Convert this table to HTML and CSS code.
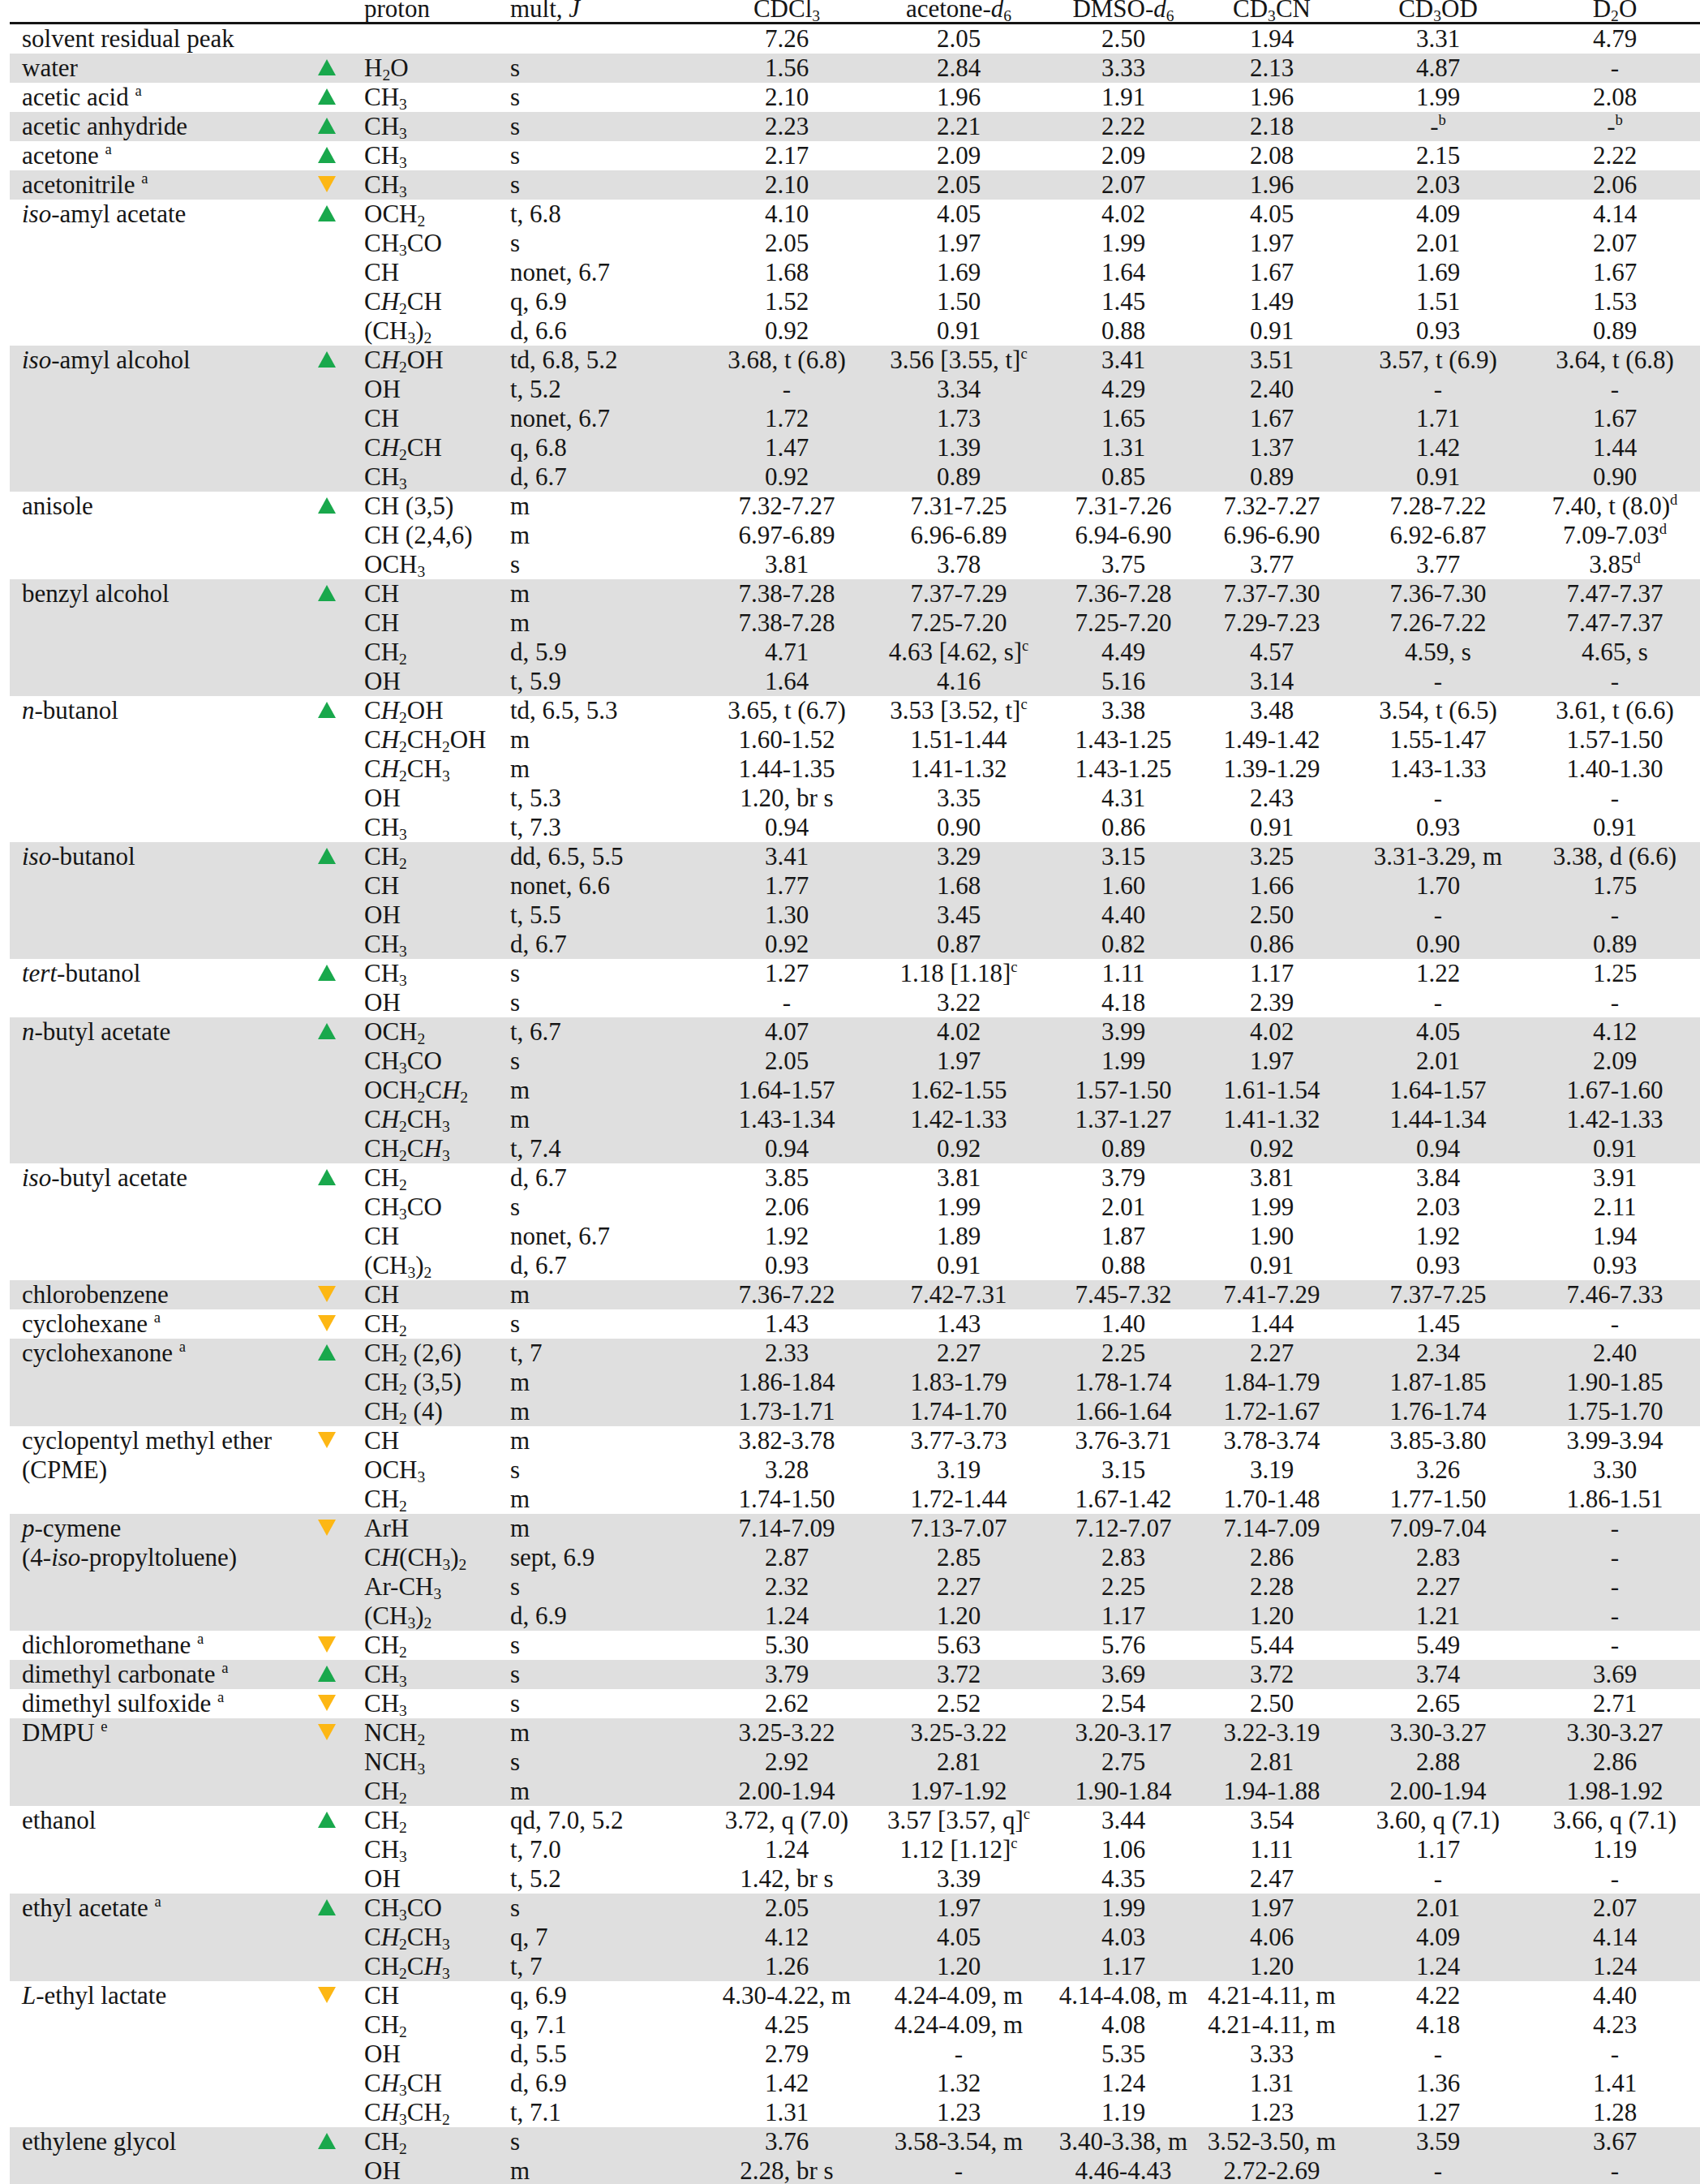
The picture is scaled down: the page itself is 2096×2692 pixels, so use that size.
FILE: index.html
```html
<!DOCTYPE html>
<html>
<head>
<meta charset="utf-8">
<title>Residual solvent shifts</title>
<link rel="stylesheet" href="styles.css">
</head>
<body>
<div class="tbl">
  <div class="hdr">
    <div></div><div></div><div>proton</div><div>mult, <i>J</i></div>
    <div class="v">CDCl<sub>3</sub></div><div class="v">acetone-<i>d</i><sub>6</sub></div><div class="v">DMSO-<i>d</i><sub>6</sub></div><div class="v">CD<sub>3</sub>CN</div><div class="v">CD<sub>3</sub>OD</div><div class="v">D<sub>2</sub>O</div>
  </div>

  <div class="grp">
    <div class="nm">solvent residual peak</div><div class="tr"></div><div></div><div></div>
    <div class="v">7.26</div><div class="v">2.05</div><div class="v">2.50</div><div class="v">1.94</div><div class="v">3.31</div><div class="v">4.79</div>
  </div>

  <div class="grp g">
    <div class="nm">water</div><div class="tr"><svg class="tri" viewBox="0 0 22 20"><polygon class="up" points="11,0 22,20 0,20"/></svg></div>
    <div>H<sub>2</sub>O</div><div>s</div><div class="v">1.56</div><div class="v">2.84</div><div class="v">3.33</div><div class="v">2.13</div><div class="v">4.87</div><div class="v">-</div>
  </div>

  <div class="grp">
    <div class="nm">acetic acid <sup>a</sup></div><div class="tr"><svg class="tri" viewBox="0 0 22 20"><polygon class="up" points="11,0 22,20 0,20"/></svg></div>
    <div>CH<sub>3</sub></div><div>s</div><div class="v">2.10</div><div class="v">1.96</div><div class="v">1.91</div><div class="v">1.96</div><div class="v">1.99</div><div class="v">2.08</div>
  </div>

  <div class="grp g">
    <div class="nm">acetic anhydride</div><div class="tr"><svg class="tri" viewBox="0 0 22 20"><polygon class="up" points="11,0 22,20 0,20"/></svg></div>
    <div>CH<sub>3</sub></div><div>s</div><div class="v">2.23</div><div class="v">2.21</div><div class="v">2.22</div><div class="v">2.18</div><div class="v">-<sup>b</sup></div><div class="v">-<sup>b</sup></div>
  </div>

  <div class="grp">
    <div class="nm">acetone <sup>a</sup></div><div class="tr"><svg class="tri" viewBox="0 0 22 20"><polygon class="up" points="11,0 22,20 0,20"/></svg></div>
    <div>CH<sub>3</sub></div><div>s</div><div class="v">2.17</div><div class="v">2.09</div><div class="v">2.09</div><div class="v">2.08</div><div class="v">2.15</div><div class="v">2.22</div>
  </div>

  <div class="grp g">
    <div class="nm">acetonitrile <sup>a</sup></div><div class="tr"><svg class="tri" viewBox="0 0 22 20"><polygon class="dn" points="0,0 22,0 11,20"/></svg></div>
    <div>CH<sub>3</sub></div><div>s</div><div class="v">2.10</div><div class="v">2.05</div><div class="v">2.07</div><div class="v">1.96</div><div class="v">2.03</div><div class="v">2.06</div>
  </div>

  <div class="grp">
    <div class="nm s5"><i>iso</i>-amyl acetate</div><div class="tr s5"><svg class="tri" viewBox="0 0 22 20"><polygon class="up" points="11,0 22,20 0,20"/></svg></div>
    <div>OCH<sub>2</sub></div><div>t, 6.8</div><div class="v">4.10</div><div class="v">4.05</div><div class="v">4.02</div><div class="v">4.05</div><div class="v">4.09</div><div class="v">4.14</div>
    <div>CH<sub>3</sub>CO</div><div>s</div><div class="v">2.05</div><div class="v">1.97</div><div class="v">1.99</div><div class="v">1.97</div><div class="v">2.01</div><div class="v">2.07</div>
    <div>CH</div><div>nonet, 6.7</div><div class="v">1.68</div><div class="v">1.69</div><div class="v">1.64</div><div class="v">1.67</div><div class="v">1.69</div><div class="v">1.67</div>
    <div>C<i>H</i><sub>2</sub>CH</div><div>q, 6.9</div><div class="v">1.52</div><div class="v">1.50</div><div class="v">1.45</div><div class="v">1.49</div><div class="v">1.51</div><div class="v">1.53</div>
    <div>(CH<sub>3</sub>)<sub>2</sub></div><div>d, 6.6</div><div class="v">0.92</div><div class="v">0.91</div><div class="v">0.88</div><div class="v">0.91</div><div class="v">0.93</div><div class="v">0.89</div>
  </div>

  <div class="grp g">
    <div class="nm s5"><i>iso</i>-amyl alcohol</div><div class="tr s5"><svg class="tri" viewBox="0 0 22 20"><polygon class="up" points="11,0 22,20 0,20"/></svg></div>
    <div>C<i>H</i><sub>2</sub>OH</div><div>td, 6.8, 5.2</div><div class="v">3.68, t (6.8)</div><div class="v">3.56 [3.55, t]<sup>c</sup></div><div class="v">3.41</div><div class="v">3.51</div><div class="v">3.57, t (6.9)</div><div class="v">3.64, t (6.8)</div>
    <div>OH</div><div>t, 5.2</div><div class="v">-</div><div class="v">3.34</div><div class="v">4.29</div><div class="v">2.40</div><div class="v">-</div><div class="v">-</div>
    <div>CH</div><div>nonet, 6.7</div><div class="v">1.72</div><div class="v">1.73</div><div class="v">1.65</div><div class="v">1.67</div><div class="v">1.71</div><div class="v">1.67</div>
    <div>C<i>H</i><sub>2</sub>CH</div><div>q, 6.8</div><div class="v">1.47</div><div class="v">1.39</div><div class="v">1.31</div><div class="v">1.37</div><div class="v">1.42</div><div class="v">1.44</div>
    <div>CH<sub>3</sub></div><div>d, 6.7</div><div class="v">0.92</div><div class="v">0.89</div><div class="v">0.85</div><div class="v">0.89</div><div class="v">0.91</div><div class="v">0.90</div>
  </div>

  <div class="grp">
    <div class="nm s3">anisole</div><div class="tr s3"><svg class="tri" viewBox="0 0 22 20"><polygon class="up" points="11,0 22,20 0,20"/></svg></div>
    <div>CH (3,5)</div><div>m</div><div class="v">7.32-7.27</div><div class="v">7.31-7.25</div><div class="v">7.31-7.26</div><div class="v">7.32-7.27</div><div class="v">7.28-7.22</div><div class="v">7.40, t (8.0)<sup>d</sup></div>
    <div>CH (2,4,6)</div><div>m</div><div class="v">6.97-6.89</div><div class="v">6.96-6.89</div><div class="v">6.94-6.90</div><div class="v">6.96-6.90</div><div class="v">6.92-6.87</div><div class="v">7.09-7.03<sup>d</sup></div>
    <div>OCH<sub>3</sub></div><div>s</div><div class="v">3.81</div><div class="v">3.78</div><div class="v">3.75</div><div class="v">3.77</div><div class="v">3.77</div><div class="v">3.85<sup>d</sup></div>
  </div>

  <div class="grp g">
    <div class="nm s4">benzyl alcohol</div><div class="tr s4"><svg class="tri" viewBox="0 0 22 20"><polygon class="up" points="11,0 22,20 0,20"/></svg></div>
    <div>CH</div><div>m</div><div class="v">7.38-7.28</div><div class="v">7.37-7.29</div><div class="v">7.36-7.28</div><div class="v">7.37-7.30</div><div class="v">7.36-7.30</div><div class="v">7.47-7.37</div>
    <div>CH</div><div>m</div><div class="v">7.38-7.28</div><div class="v">7.25-7.20</div><div class="v">7.25-7.20</div><div class="v">7.29-7.23</div><div class="v">7.26-7.22</div><div class="v">7.47-7.37</div>
    <div>CH<sub>2</sub></div><div>d, 5.9</div><div class="v">4.71</div><div class="v">4.63 [4.62, s]<sup>c</sup></div><div class="v">4.49</div><div class="v">4.57</div><div class="v">4.59, s</div><div class="v">4.65, s</div>
    <div>OH</div><div>t, 5.9</div><div class="v">1.64</div><div class="v">4.16</div><div class="v">5.16</div><div class="v">3.14</div><div class="v">-</div><div class="v">-</div>
  </div>

  <div class="grp">
    <div class="nm s5"><i>n</i>-butanol</div><div class="tr s5"><svg class="tri" viewBox="0 0 22 20"><polygon class="up" points="11,0 22,20 0,20"/></svg></div>
    <div>C<i>H</i><sub>2</sub>OH</div><div>td, 6.5, 5.3</div><div class="v">3.65, t (6.7)</div><div class="v">3.53 [3.52, t]<sup>c</sup></div><div class="v">3.38</div><div class="v">3.48</div><div class="v">3.54, t (6.5)</div><div class="v">3.61, t (6.6)</div>
    <div>C<i>H</i><sub>2</sub>CH<sub>2</sub>OH</div><div>m</div><div class="v">1.60-1.52</div><div class="v">1.51-1.44</div><div class="v">1.43-1.25</div><div class="v">1.49-1.42</div><div class="v">1.55-1.47</div><div class="v">1.57-1.50</div>
    <div>C<i>H</i><sub>2</sub>CH<sub>3</sub></div><div>m</div><div class="v">1.44-1.35</div><div class="v">1.41-1.32</div><div class="v">1.43-1.25</div><div class="v">1.39-1.29</div><div class="v">1.43-1.33</div><div class="v">1.40-1.30</div>
    <div>OH</div><div>t, 5.3</div><div class="v">1.20, br s</div><div class="v">3.35</div><div class="v">4.31</div><div class="v">2.43</div><div class="v">-</div><div class="v">-</div>
    <div>CH<sub>3</sub></div><div>t, 7.3</div><div class="v">0.94</div><div class="v">0.90</div><div class="v">0.86</div><div class="v">0.91</div><div class="v">0.93</div><div class="v">0.91</div>
  </div>

  <div class="grp g">
    <div class="nm s4"><i>iso</i>-butanol</div><div class="tr s4"><svg class="tri" viewBox="0 0 22 20"><polygon class="up" points="11,0 22,20 0,20"/></svg></div>
    <div>CH<sub>2</sub></div><div>dd, 6.5, 5.5</div><div class="v">3.41</div><div class="v">3.29</div><div class="v">3.15</div><div class="v">3.25</div><div class="v">3.31-3.29, m</div><div class="v">3.38, d (6.6)</div>
    <div>CH</div><div>nonet, 6.6</div><div class="v">1.77</div><div class="v">1.68</div><div class="v">1.60</div><div class="v">1.66</div><div class="v">1.70</div><div class="v">1.75</div>
    <div>OH</div><div>t, 5.5</div><div class="v">1.30</div><div class="v">3.45</div><div class="v">4.40</div><div class="v">2.50</div><div class="v">-</div><div class="v">-</div>
    <div>CH<sub>3</sub></div><div>d, 6.7</div><div class="v">0.92</div><div class="v">0.87</div><div class="v">0.82</div><div class="v">0.86</div><div class="v">0.90</div><div class="v">0.89</div>
  </div>

  <div class="grp">
    <div class="nm s2"><i>tert</i>-butanol</div><div class="tr s2"><svg class="tri" viewBox="0 0 22 20"><polygon class="up" points="11,0 22,20 0,20"/></svg></div>
    <div>CH<sub>3</sub></div><div>s</div><div class="v">1.27</div><div class="v">1.18 [1.18]<sup>c</sup></div><div class="v">1.11</div><div class="v">1.17</div><div class="v">1.22</div><div class="v">1.25</div>
    <div>OH</div><div>s</div><div class="v">-</div><div class="v">3.22</div><div class="v">4.18</div><div class="v">2.39</div><div class="v">-</div><div class="v">-</div>
  </div>

  <div class="grp g">
    <div class="nm s5"><i>n</i>-butyl acetate</div><div class="tr s5"><svg class="tri" viewBox="0 0 22 20"><polygon class="up" points="11,0 22,20 0,20"/></svg></div>
    <div>OCH<sub>2</sub></div><div>t, 6.7</div><div class="v">4.07</div><div class="v">4.02</div><div class="v">3.99</div><div class="v">4.02</div><div class="v">4.05</div><div class="v">4.12</div>
    <div>CH<sub>3</sub>CO</div><div>s</div><div class="v">2.05</div><div class="v">1.97</div><div class="v">1.99</div><div class="v">1.97</div><div class="v">2.01</div><div class="v">2.09</div>
    <div>OCH<sub>2</sub>C<i>H</i><sub>2</sub></div><div>m</div><div class="v">1.64-1.57</div><div class="v">1.62-1.55</div><div class="v">1.57-1.50</div><div class="v">1.61-1.54</div><div class="v">1.64-1.57</div><div class="v">1.67-1.60</div>
    <div>C<i>H</i><sub>2</sub>CH<sub>3</sub></div><div>m</div><div class="v">1.43-1.34</div><div class="v">1.42-1.33</div><div class="v">1.37-1.27</div><div class="v">1.41-1.32</div><div class="v">1.44-1.34</div><div class="v">1.42-1.33</div>
    <div>CH<sub>2</sub>C<i>H</i><sub>3</sub></div><div>t, 7.4</div><div class="v">0.94</div><div class="v">0.92</div><div class="v">0.89</div><div class="v">0.92</div><div class="v">0.94</div><div class="v">0.91</div>
  </div>

  <div class="grp">
    <div class="nm s4"><i>iso</i>-butyl acetate</div><div class="tr s4"><svg class="tri" viewBox="0 0 22 20"><polygon class="up" points="11,0 22,20 0,20"/></svg></div>
    <div>CH<sub>2</sub></div><div>d, 6.7</div><div class="v">3.85</div><div class="v">3.81</div><div class="v">3.79</div><div class="v">3.81</div><div class="v">3.84</div><div class="v">3.91</div>
    <div>CH<sub>3</sub>CO</div><div>s</div><div class="v">2.06</div><div class="v">1.99</div><div class="v">2.01</div><div class="v">1.99</div><div class="v">2.03</div><div class="v">2.11</div>
    <div>CH</div><div>nonet, 6.7</div><div class="v">1.92</div><div class="v">1.89</div><div class="v">1.87</div><div class="v">1.90</div><div class="v">1.92</div><div class="v">1.94</div>
    <div>(CH<sub>3</sub>)<sub>2</sub></div><div>d, 6.7</div><div class="v">0.93</div><div class="v">0.91</div><div class="v">0.88</div><div class="v">0.91</div><div class="v">0.93</div><div class="v">0.93</div>
  </div>

  <div class="grp g">
    <div class="nm">chlorobenzene</div><div class="tr"><svg class="tri" viewBox="0 0 22 20"><polygon class="dn" points="0,0 22,0 11,20"/></svg></div>
    <div>CH</div><div>m</div><div class="v">7.36-7.22</div><div class="v">7.42-7.31</div><div class="v">7.45-7.32</div><div class="v">7.41-7.29</div><div class="v">7.37-7.25</div><div class="v">7.46-7.33</div>
  </div>

  <div class="grp">
    <div class="nm">cyclohexane <sup>a</sup></div><div class="tr"><svg class="tri" viewBox="0 0 22 20"><polygon class="dn" points="0,0 22,0 11,20"/></svg></div>
    <div>CH<sub>2</sub></div><div>s</div><div class="v">1.43</div><div class="v">1.43</div><div class="v">1.40</div><div class="v">1.44</div><div class="v">1.45</div><div class="v">-</div>
  </div>

  <div class="grp g">
    <div class="nm s3">cyclohexanone <sup>a</sup></div><div class="tr s3"><svg class="tri" viewBox="0 0 22 20"><polygon class="up" points="11,0 22,20 0,20"/></svg></div>
    <div>CH<sub>2</sub> (2,6)</div><div>t, 7</div><div class="v">2.33</div><div class="v">2.27</div><div class="v">2.25</div><div class="v">2.27</div><div class="v">2.34</div><div class="v">2.40</div>
    <div>CH<sub>2</sub> (3,5)</div><div>m</div><div class="v">1.86-1.84</div><div class="v">1.83-1.79</div><div class="v">1.78-1.74</div><div class="v">1.84-1.79</div><div class="v">1.87-1.85</div><div class="v">1.90-1.85</div>
    <div>CH<sub>2</sub> (4)</div><div>m</div><div class="v">1.73-1.71</div><div class="v">1.74-1.70</div><div class="v">1.66-1.64</div><div class="v">1.72-1.67</div><div class="v">1.76-1.74</div><div class="v">1.75-1.70</div>
  </div>

  <div class="grp">
    <div class="nm s3">cyclopentyl methyl ether<br>(CPME)</div><div class="tr s3"><svg class="tri" viewBox="0 0 22 20"><polygon class="dn" points="0,0 22,0 11,20"/></svg></div>
    <div>CH</div><div>m</div><div class="v">3.82-3.78</div><div class="v">3.77-3.73</div><div class="v">3.76-3.71</div><div class="v">3.78-3.74</div><div class="v">3.85-3.80</div><div class="v">3.99-3.94</div>
    <div>OCH<sub>3</sub></div><div>s</div><div class="v">3.28</div><div class="v">3.19</div><div class="v">3.15</div><div class="v">3.19</div><div class="v">3.26</div><div class="v">3.30</div>
    <div>CH<sub>2</sub></div><div>m</div><div class="v">1.74-1.50</div><div class="v">1.72-1.44</div><div class="v">1.67-1.42</div><div class="v">1.70-1.48</div><div class="v">1.77-1.50</div><div class="v">1.86-1.51</div>
  </div>

  <div class="grp g">
    <div class="nm s4"><i>p</i>-cymene<br>(4-<i>iso</i>-propyltoluene)</div><div class="tr s4"><svg class="tri" viewBox="0 0 22 20"><polygon class="dn" points="0,0 22,0 11,20"/></svg></div>
    <div>ArH</div><div>m</div><div class="v">7.14-7.09</div><div class="v">7.13-7.07</div><div class="v">7.12-7.07</div><div class="v">7.14-7.09</div><div class="v">7.09-7.04</div><div class="v">-</div>
    <div>C<i>H</i>(CH<sub>3</sub>)<sub>2</sub></div><div>sept, 6.9</div><div class="v">2.87</div><div class="v">2.85</div><div class="v">2.83</div><div class="v">2.86</div><div class="v">2.83</div><div class="v">-</div>
    <div>Ar-CH<sub>3</sub></div><div>s</div><div class="v">2.32</div><div class="v">2.27</div><div class="v">2.25</div><div class="v">2.28</div><div class="v">2.27</div><div class="v">-</div>
    <div>(CH<sub>3</sub>)<sub>2</sub></div><div>d, 6.9</div><div class="v">1.24</div><div class="v">1.20</div><div class="v">1.17</div><div class="v">1.20</div><div class="v">1.21</div><div class="v">-</div>
  </div>

  <div class="grp">
    <div class="nm">dichloromethane <sup>a</sup></div><div class="tr"><svg class="tri" viewBox="0 0 22 20"><polygon class="dn" points="0,0 22,0 11,20"/></svg></div>
    <div>CH<sub>2</sub></div><div>s</div><div class="v">5.30</div><div class="v">5.63</div><div class="v">5.76</div><div class="v">5.44</div><div class="v">5.49</div><div class="v">-</div>
  </div>

  <div class="grp g">
    <div class="nm">dimethyl carbonate <sup>a</sup></div><div class="tr"><svg class="tri" viewBox="0 0 22 20"><polygon class="up" points="11,0 22,20 0,20"/></svg></div>
    <div>CH<sub>3</sub></div><div>s</div><div class="v">3.79</div><div class="v">3.72</div><div class="v">3.69</div><div class="v">3.72</div><div class="v">3.74</div><div class="v">3.69</div>
  </div>

  <div class="grp">
    <div class="nm">dimethyl sulfoxide <sup>a</sup></div><div class="tr"><svg class="tri" viewBox="0 0 22 20"><polygon class="dn" points="0,0 22,0 11,20"/></svg></div>
    <div>CH<sub>3</sub></div><div>s</div><div class="v">2.62</div><div class="v">2.52</div><div class="v">2.54</div><div class="v">2.50</div><div class="v">2.65</div><div class="v">2.71</div>
  </div>

  <div class="grp g">
    <div class="nm s3">DMPU <sup>e</sup></div><div class="tr s3"><svg class="tri" viewBox="0 0 22 20"><polygon class="dn" points="0,0 22,0 11,20"/></svg></div>
    <div>NCH<sub>2</sub></div><div>m</div><div class="v">3.25-3.22</div><div class="v">3.25-3.22</div><div class="v">3.20-3.17</div><div class="v">3.22-3.19</div><div class="v">3.30-3.27</div><div class="v">3.30-3.27</div>
    <div>NCH<sub>3</sub></div><div>s</div><div class="v">2.92</div><div class="v">2.81</div><div class="v">2.75</div><div class="v">2.81</div><div class="v">2.88</div><div class="v">2.86</div>
    <div>CH<sub>2</sub></div><div>m</div><div class="v">2.00-1.94</div><div class="v">1.97-1.92</div><div class="v">1.90-1.84</div><div class="v">1.94-1.88</div><div class="v">2.00-1.94</div><div class="v">1.98-1.92</div>
  </div>

  <div class="grp">
    <div class="nm s3">ethanol</div><div class="tr s3"><svg class="tri" viewBox="0 0 22 20"><polygon class="up" points="11,0 22,20 0,20"/></svg></div>
    <div>CH<sub>2</sub></div><div>qd, 7.0, 5.2</div><div class="v">3.72, q (7.0)</div><div class="v">3.57 [3.57, q]<sup>c</sup></div><div class="v">3.44</div><div class="v">3.54</div><div class="v">3.60, q (7.1)</div><div class="v">3.66, q (7.1)</div>
    <div>CH<sub>3</sub></div><div>t, 7.0</div><div class="v">1.24</div><div class="v">1.12 [1.12]<sup>c</sup></div><div class="v">1.06</div><div class="v">1.11</div><div class="v">1.17</div><div class="v">1.19</div>
    <div>OH</div><div>t, 5.2</div><div class="v">1.42, br s</div><div class="v">3.39</div><div class="v">4.35</div><div class="v">2.47</div><div class="v">-</div><div class="v">-</div>
  </div>

  <div class="grp g">
    <div class="nm s3">ethyl acetate <sup>a</sup></div><div class="tr s3"><svg class="tri" viewBox="0 0 22 20"><polygon class="up" points="11,0 22,20 0,20"/></svg></div>
    <div>CH<sub>3</sub>CO</div><div>s</div><div class="v">2.05</div><div class="v">1.97</div><div class="v">1.99</div><div class="v">1.97</div><div class="v">2.01</div><div class="v">2.07</div>
    <div>C<i>H</i><sub>2</sub>CH<sub>3</sub></div><div>q, 7</div><div class="v">4.12</div><div class="v">4.05</div><div class="v">4.03</div><div class="v">4.06</div><div class="v">4.09</div><div class="v">4.14</div>
    <div>CH<sub>2</sub>C<i>H</i><sub>3</sub></div><div>t, 7</div><div class="v">1.26</div><div class="v">1.20</div><div class="v">1.17</div><div class="v">1.20</div><div class="v">1.24</div><div class="v">1.24</div>
  </div>

  <div class="grp">
    <div class="nm s5"><i>L</i>-ethyl lactate</div><div class="tr s5"><svg class="tri" viewBox="0 0 22 20"><polygon class="dn" points="0,0 22,0 11,20"/></svg></div>
    <div>CH</div><div>q, 6.9</div><div class="v">4.30-4.22, m</div><div class="v">4.24-4.09, m</div><div class="v">4.14-4.08, m</div><div class="v">4.21-4.11, m</div><div class="v">4.22</div><div class="v">4.40</div>
    <div>CH<sub>2</sub></div><div>q, 7.1</div><div class="v">4.25</div><div class="v">4.24-4.09, m</div><div class="v">4.08</div><div class="v">4.21-4.11, m</div><div class="v">4.18</div><div class="v">4.23</div>
    <div>OH</div><div>d, 5.5</div><div class="v">2.79</div><div class="v">-</div><div class="v">5.35</div><div class="v">3.33</div><div class="v">-</div><div class="v">-</div>
    <div>C<i>H</i><sub>3</sub>CH</div><div>d, 6.9</div><div class="v">1.42</div><div class="v">1.32</div><div class="v">1.24</div><div class="v">1.31</div><div class="v">1.36</div><div class="v">1.41</div>
    <div>C<i>H</i><sub>3</sub>CH<sub>2</sub></div><div>t, 7.1</div><div class="v">1.31</div><div class="v">1.23</div><div class="v">1.19</div><div class="v">1.23</div><div class="v">1.27</div><div class="v">1.28</div>
  </div>

  <div class="grp g">
    <div class="nm s2">ethylene glycol</div><div class="tr s2"><svg class="tri" viewBox="0 0 22 20"><polygon class="up" points="11,0 22,20 0,20"/></svg></div>
    <div>CH<sub>2</sub></div><div>s</div><div class="v">3.76</div><div class="v">3.58-3.54, m</div><div class="v">3.40-3.38, m</div><div class="v">3.52-3.50, m</div><div class="v">3.59</div><div class="v">3.67</div>
    <div>OH</div><div>m</div><div class="v">2.28, br s</div><div class="v">-</div><div class="v">4.46-4.43</div><div class="v">2.72-2.69</div><div class="v">-</div><div class="v">-</div>
  </div>
</div>
</body>
</html>
```
FILE: styles.css
```css
html, body {
  margin: 0;
  padding: 0;
  background: #ffffff;
}

body {
  font-family: "Liberation Serif", "Times New Roman", serif;
  font-size: 31px;
  color: #151515;
}

.tbl {
  margin-left: 12px;
  width: 2084px;
}

.hdr,
.grp {
  display: grid;
  grid-template-columns: 378px 59px 180px 241px 200px 224px 182px 184px 226px 210px;
  white-space: nowrap;
}

.hdr {
  height: 27px;
  line-height: 22px;
  border-bottom: 3px solid #151515;
}

.grp {
  grid-auto-rows: 36px;
  line-height: 36px;
}

.g {
  background: #dfdfdf;
}

.nm {
  padding-left: 15px;
}

.s2 { grid-row: span 2; }
.s3 { grid-row: span 3; }
.s4 { grid-row: span 4; }
.s5 { grid-row: span 5; }

.tr {
  padding-left: 2px;
  padding-top: 7px;
  line-height: 0;
}

.tri {
  display: block;
  width: 22px;
  height: 20px;
}

.up { fill: #19a84c; }
.dn { fill: #fdb714; }

.v {
  text-align: center;
}

sub {
  font-size: 0.63em;
  vertical-align: -5px;
  line-height: 0;
}

sup {
  font-size: 0.6em;
  vertical-align: 12px;
  line-height: 0;
}
```
